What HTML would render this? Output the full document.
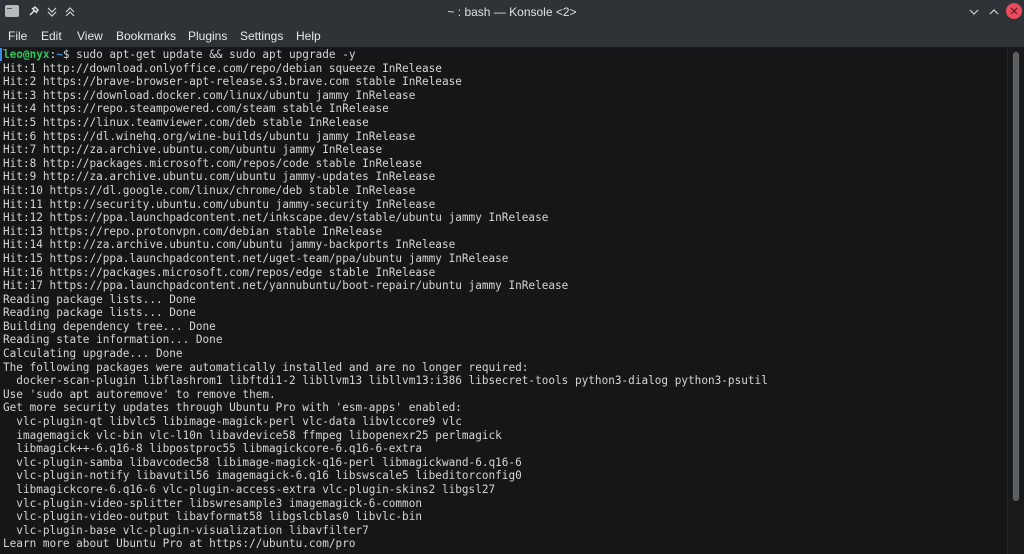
<!DOCTYPE html>
<html><head><meta charset="utf-8"><style>
*{margin:0;padding:0;box-sizing:border-box}
body{width:1024px;height:554px;overflow:hidden;background:#141617;font-family:"Liberation Sans","DejaVu Sans",sans-serif;position:relative}
#title{position:absolute;top:0;left:0;width:1024px;height:24px;background:#2f3337;color:#dfe1e3;font-size:12px}
#title .t{position:absolute;left:0;right:0;top:5px;text-align:center}
#menu{position:absolute;top:24px;left:0;width:1024px;height:23px;background:#2f3337;color:#e6e7e8;font-size:12px}
#menu span{position:absolute;top:5px}
#term{position:absolute;top:47px;left:0;width:1007px;height:507px;background:#141617}
pre{position:absolute;left:3px;top:1px;font-family:"DejaVu Sans Mono","Liberation Mono",monospace;font-size:11.05px;line-height:13.6px;color:#d3d5d6}
.g{color:#2fc45a;font-weight:bold}.b{color:#3c8ce7;font-weight:bold}
#sep{position:absolute;left:1007px;top:47px;width:1px;height:507px;background:#26292b}
#sb{position:absolute;left:1008px;top:47px;width:16px;height:507px;background:#17191a}
#thumb{position:absolute;left:1013px;top:52px;width:6px;height:449px;border-radius:3px;background:#5a5d60;border:1px solid #6a6d70}
#cur{position:absolute;left:0;top:48px;width:2px;height:13px;background:#3c8ce7}
</style></head><body>
<div id="title">
<div style="position:absolute;left:5px;top:5px;width:14px;height:12px;background:#b7babd;border-radius:2px"></div>
<div style="position:absolute;left:7px;top:8px;width:5px;height:1px;background:#555"></div>
<svg style="position:absolute;left:25px;top:4px" width="16" height="16" viewBox="0 0 16 16"><path d="M5 11 L9 7 M7 4 L12 9 M8 5 L10 3 L13 6 L11 8" stroke="#e0e0e0" stroke-width="1.5" fill="none"/></svg>
<svg style="position:absolute;left:44px;top:4px" width="16" height="16" viewBox="0 0 16 16"><path d="M4 4 L8 8 L12 4 M4 8 L8 12 L12 8" stroke="#d0d0d0" stroke-width="1.2" fill="none"/></svg>
<svg style="position:absolute;left:62px;top:4px" width="16" height="16" viewBox="0 0 16 16"><path d="M4 8 L8 4 L12 8 M4 12 L8 8 L12 12" stroke="#d0d0d0" stroke-width="1.2" fill="none"/></svg>
<div class="t">~ : bash — Konsole &lt;2&gt;</div>
<svg style="position:absolute;left:966px;top:4px" width="16" height="16" viewBox="0 0 16 16"><path d="M4 6 L8 10 L12 6" stroke="#d0d0d0" stroke-width="1.2" fill="none"/></svg>
<svg style="position:absolute;left:986px;top:4px" width="16" height="16" viewBox="0 0 16 16"><path d="M4 10 L8 6 L12 10" stroke="#d0d0d0" stroke-width="1.2" fill="none"/></svg>
<div style="position:absolute;left:1006px;top:3px;width:16px;height:16px;border-radius:50%;background:#e94b5d"></div>
<svg style="position:absolute;left:1006px;top:3px" width="16" height="16" viewBox="0 0 16 16"><path d="M5 5 L11 11 M11 5 L5 11" stroke="#5a1a20" stroke-width="1.2"/></svg>
</div>
<div id="menu">
<span style="left:8px">File</span><span style="left:41px">Edit</span><span style="left:77px">View</span><span style="left:116px">Bookmarks</span><span style="left:188px">Plugins</span><span style="left:240px">Settings</span><span style="left:296px">Help</span>
</div>
<div id="term"><pre><span class="g">leo@nyx</span>:<span class="b">~</span>$ sudo apt-get update &amp;&amp; sudo apt upgrade -y
Hit:1 http://download.onlyoffice.com/repo/debian squeeze InRelease
Hit:2 https://brave-browser-apt-release.s3.brave.com stable InRelease
Hit:3 https://download.docker.com/linux/ubuntu jammy InRelease
Hit:4 https://repo.steampowered.com/steam stable InRelease
Hit:5 https://linux.teamviewer.com/deb stable InRelease
Hit:6 https://dl.winehq.org/wine-builds/ubuntu jammy InRelease
Hit:7 http://za.archive.ubuntu.com/ubuntu jammy InRelease
Hit:8 http://packages.microsoft.com/repos/code stable InRelease
Hit:9 http://za.archive.ubuntu.com/ubuntu jammy-updates InRelease
Hit:10 https://dl.google.com/linux/chrome/deb stable InRelease
Hit:11 http://security.ubuntu.com/ubuntu jammy-security InRelease
Hit:12 https://ppa.launchpadcontent.net/inkscape.dev/stable/ubuntu jammy InRelease
Hit:13 https://repo.protonvpn.com/debian stable InRelease
Hit:14 http://za.archive.ubuntu.com/ubuntu jammy-backports InRelease
Hit:15 https://ppa.launchpadcontent.net/uget-team/ppa/ubuntu jammy InRelease
Hit:16 https://packages.microsoft.com/repos/edge stable InRelease
Hit:17 https://ppa.launchpadcontent.net/yannubuntu/boot-repair/ubuntu jammy InRelease
Reading package lists... Done
Reading package lists... Done
Building dependency tree... Done
Reading state information... Done
Calculating upgrade... Done
The following packages were automatically installed and are no longer required:
  docker-scan-plugin libflashrom1 libftdi1-2 libllvm13 libllvm13:i386 libsecret-tools python3-dialog python3-psutil
Use 'sudo apt autoremove' to remove them.
Get more security updates through Ubuntu Pro with 'esm-apps' enabled:
  vlc-plugin-qt libvlc5 libimage-magick-perl vlc-data libvlccore9 vlc
  imagemagick vlc-bin vlc-l10n libavdevice58 ffmpeg libopenexr25 perlmagick
  libmagick++-6.q16-8 libpostproc55 libmagickcore-6.q16-6-extra
  vlc-plugin-samba libavcodec58 libimage-magick-q16-perl libmagickwand-6.q16-6
  vlc-plugin-notify libavutil56 imagemagick-6.q16 libswscale5 libeditorconfig0
  libmagickcore-6.q16-6 vlc-plugin-access-extra vlc-plugin-skins2 libgsl27
  vlc-plugin-video-splitter libswresample3 imagemagick-6-common
  vlc-plugin-video-output libavformat58 libgslcblas0 libvlc-bin
  vlc-plugin-base vlc-plugin-visualization libavfilter7
Learn more about Ubuntu Pro at https://ubuntu.com/pro</pre></div>
<div id="cur"></div>
<div id="sep"></div><div id="sb"></div><div id="thumb"></div>
</body></html>
